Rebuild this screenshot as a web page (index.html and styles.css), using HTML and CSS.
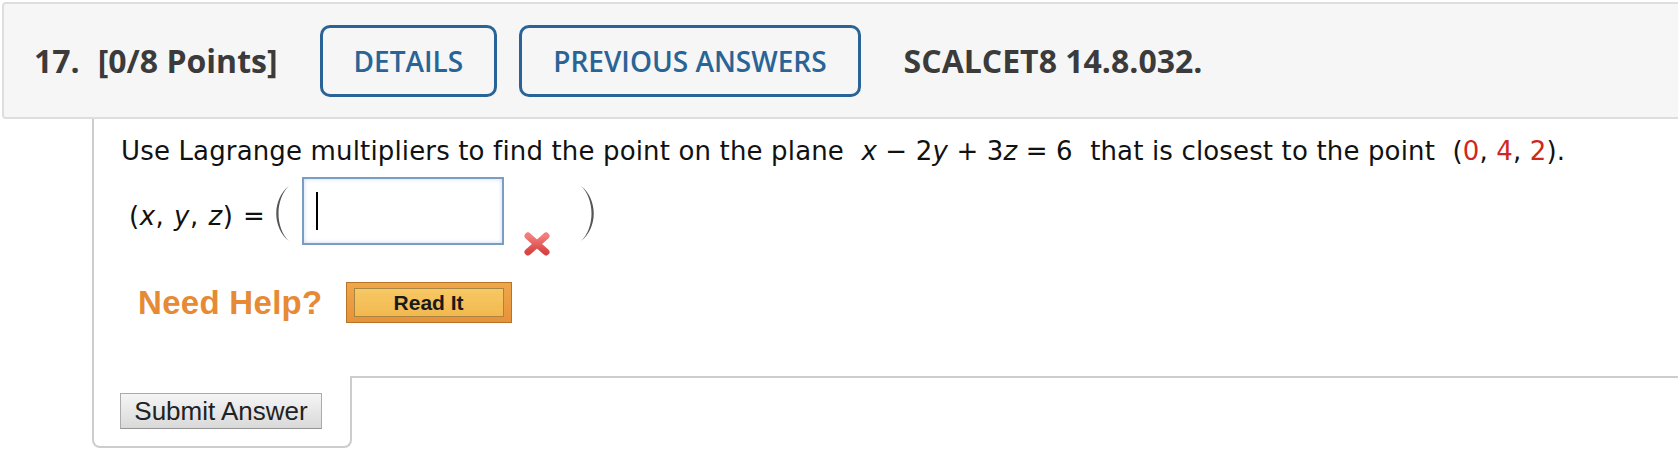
FILE: index.html
```html
<html>

<head>
    <title>Question 17</title>
    <meta charset="utf-8">
    <link rel="stylesheet" href="styles.css">
</head>

<body>
    <div class="question">
        <div class="question-header">
            <span class="q-number">17.</span>
            <span class="q-points">[0/8 Points]</span>
            <button class="tab-btn details-btn">DETAILS</button>
            <button class="tab-btn previous-btn">PREVIOUS ANSWERS</button>
            <span class="q-ref">SCALCET8 14.8.032.</span>
        </div>

        <div class="question-body">
            <p class="prompt">Use Lagrange multipliers to find the point on the plane <span class="math"><i>x</i> &minus; 2<i>y</i> + 3<i>z</i> = 6</span> that is closest to the point <span class="point">(<span class="given">0</span>, <span class="given">4</span>, <span class="given">2</span>)</span>.</p>

            <div class="answer-row">
                <span class="answer-label">(<i>x</i>, <i>y</i>, <i>z</i>) =</span>
                <svg class="paren" width="16" height="57" viewBox="0 0 16 57">
                    <path d="M15 1 C-2 14 -2 43 15 56 C1 43 1 14 15 1 Z" fill="#555"/>
                </svg>
                <div class="answer-box"><span class="caret"></span></div>
                <svg class="wrong-mark" width="28" height="26" viewBox="0 0 28 26">
                    <defs>
                        <linearGradient id="xg" x1="0" y1="0" x2="0" y2="1">
                            <stop offset="0" stop-color="#f27d7d"/>
                            <stop offset="1" stop-color="#d84444"/>
                        </linearGradient>
                    </defs>
                    <path d="M5 5 L23 21 M23 5 L5 21" stroke="url(#xg)" stroke-width="7" stroke-linecap="round"/>
                </svg>
                <svg class="paren paren-close" width="16" height="57" viewBox="0 0 16 57">
                    <path d="M1 1 C18 14 18 43 1 56 C15 43 15 14 1 1 Z" fill="#555"/>
                </svg>
            </div>

            <div class="help-row">
                <span class="need-help">Need Help?</span>
                <button class="read-it"><span>Read It</span></button>
            </div>
        </div>

        <div class="question-footer">
            <div class="submit-tab">
                <button class="submit-btn">Submit Answer</button>
            </div>
            <div class="footer-rest"></div>
        </div>
    </div>
</body>

</html>
```

FILE: styles.css
```css
body {
    margin: 0;
    background-color: #fff;
    overflow: hidden;
}

.question {
    padding: 2px 0 0 2px;
}

/* header bar */
.question-header {
    display: flex;
    align-items: center;
    height: 117px;
    box-sizing: border-box;
    margin-right: -12px;
    padding-left: 30px;
    background-color: #f6f6f6;
    border: 2px solid #dedede;
    border-radius: 4px;
    font-family: "Open Sans", sans-serif;
    font-weight: 700;
    font-size: 32px;
    color: #3b3b3b;
}

.q-points {
    margin-left: 18px;
}

.tab-btn {
    height: 72px;
    box-sizing: border-box;
    margin-left: 22px;
    padding: 0 31px;
    border: 3px solid #2a6496;
    border-radius: 10px;
    background-color: transparent;
    color: #2a6496;
    font-family: "Open Sans", sans-serif;
    font-weight: 600;
    font-size: 28px;
    cursor: pointer;
}

.details-btn {
    margin-left: 42px;
}

.q-ref {
    margin-left: 43px;
}

/* body */
.question-body {
    margin-left: 90px;
    padding: 15px 0 53px 27px;
    border-left: 2px solid #cdcdcd;
    font-family: "DejaVu Sans", Verdana, sans-serif;
    font-size: 26px;
    line-height: 34px;
    color: #111;
}

.prompt {
    margin: 0;
    white-space: nowrap;
    letter-spacing: 0.15px;
}

.math {
    margin: 0 9px;
}

.point {
    margin-left: 9px;
}

.given {
    color: #d0281e;
}

.answer-row {
    display: flex;
    align-items: flex-start;
    height: 80px;
    margin-top: 9px;
    padding-left: 8px;
}

.answer-label {
    margin-top: 22px;
    letter-spacing: 0.5px;
    word-spacing: 1px;
}

.paren {
    margin: 8px 0 0 9px;
}

.answer-box {
    display: flex;
    align-items: center;
    width: 202px;
    height: 68px;
    box-sizing: border-box;
    margin-left: 12px;
    padding-left: 12px;
    border: 2px solid #7b9dc2;
    box-shadow: inset 0 0 4px #c7daef;
    background-color: #fff;
}

.caret {
    width: 2px;
    height: 38px;
    background-color: #000;
}

.wrong-mark {
    margin: 54px 0 0 19px;
}

.paren-close {
    margin-left: 29px;
}

.help-row {
    display: flex;
    align-items: center;
    margin-top: 25px;
    padding-left: 17px;
}

.need-help {
    font-family: "Liberation Sans", Arial, sans-serif;
    font-weight: 700;
    font-size: 33px;
    line-height: 37px;
    letter-spacing: 0.3px;
    color: #e68a35;
}

.read-it {
    width: 166px;
    height: 41px;
    box-sizing: border-box;
    margin-left: 23px;
    padding: 5px 7px;
    border: 1px solid #b8732a;
    background: linear-gradient(#f0a64a, #e8923a);
    cursor: pointer;
}

.read-it span {
    display: block;
    height: 100%;
    box-sizing: border-box;
    border: 1px solid #a9853f;
    background: linear-gradient(#f7c864, #f2b84f);
    font-family: "Liberation Sans", Arial, sans-serif;
    font-weight: 700;
    font-size: 21px;
    line-height: 27px;
    color: #1a1a1a;
}

/* footer tab */
.question-footer {
    display: flex;
    margin-left: 90px;
}

.submit-tab {
    width: 260px;
    box-sizing: border-box;
    padding: 17px 0 17px 26px;
    border: 2px solid #cdcdcd;
    border-top: none;
    border-radius: 0 0 8px 8px;
}

.footer-rest {
    flex: 1;
    margin-right: -12px;
    border-top: 2px solid #cdcdcd;
}

.submit-btn {
    display: block;
    width: 202px;
    height: 36px;
    padding: 0;
    border: 1px solid #ababab;
    border-bottom-color: #959595;
    background: linear-gradient(#f5f5f5, #d9d9d9);
    font-family: "Liberation Sans", Arial, sans-serif;
    font-size: 26px;
    line-height: 34px;
    color: #222;
    cursor: pointer;
}
```
